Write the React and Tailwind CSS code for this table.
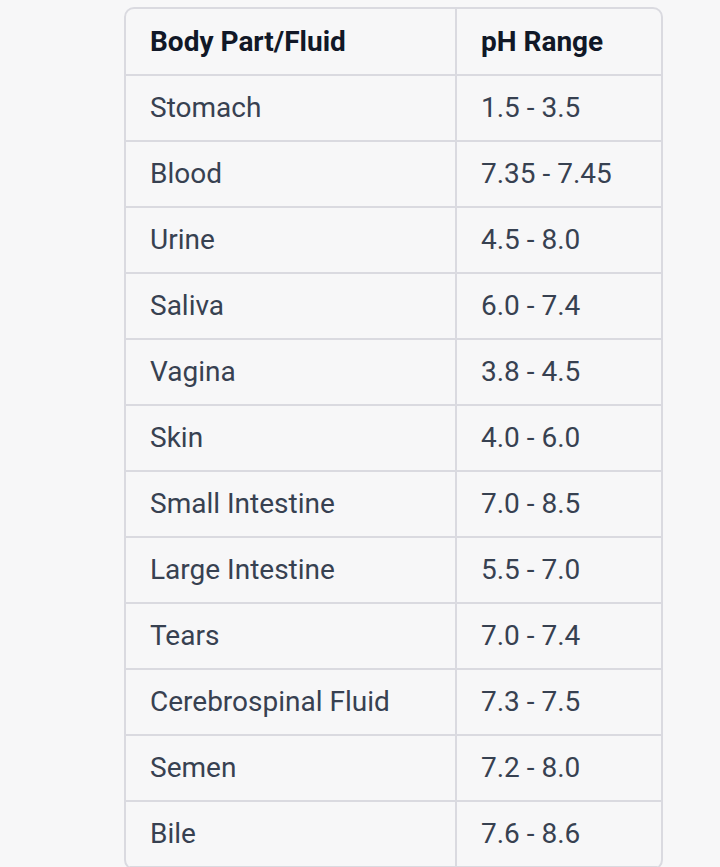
const rows = [
  ["Stomach", "1.5 - 3.5"],
  ["Blood", "7.35 - 7.45"],
  ["Urine", "4.5 - 8.0"],
  ["Saliva", "6.0 - 7.4"],
  ["Vagina", "3.8 - 4.5"],
  ["Skin", "4.0 - 6.0"],
  ["Small Intestine", "7.0 - 8.5"],
  ["Large Intestine", "5.5 - 7.0"],
  ["Tears", "7.0 - 7.4"],
  ["Cerebrospinal Fluid", "7.3 - 7.5"],
  ["Semen", "7.2 - 8.0"],
  ["Bile", "7.6 - 8.6"],
];

const App = () => {
  return (
    <div className="min-h-screen bg-[#f7f7f8] pt-[7px] font-['Roboto',sans-serif]">
      <div className="ml-[124px] w-[539px] overflow-hidden rounded-[10px] border-2 border-[#dadae0]">
        <table className="w-full border-collapse text-[28px]">
          <thead>
            <tr>
              <th className="h-[66px] w-[330px] border-b-2 border-r-2 border-[#dadae0] px-[24px] text-left font-bold text-[#111827]">
                Body Part/Fluid
              </th>
              <th className="h-[66px] border-b-2 border-[#dadae0] px-[24px] text-left font-bold text-[#111827]">
                pH Range
              </th>
            </tr>
          </thead>
          <tbody>
            {rows.map(([part, range]) => (
              <tr key={part}>
                <td className="h-[66px] border-b-2 border-r-2 border-[#dadae0] px-[24px] text-[#374151]">
                  {part}
                </td>
                <td className="h-[66px] border-b-2 border-[#dadae0] px-[24px] text-[#374151]">
                  {range}
                </td>
              </tr>
            ))}
          </tbody>
        </table>
      </div>
    </div>
  );
};

export default App;
